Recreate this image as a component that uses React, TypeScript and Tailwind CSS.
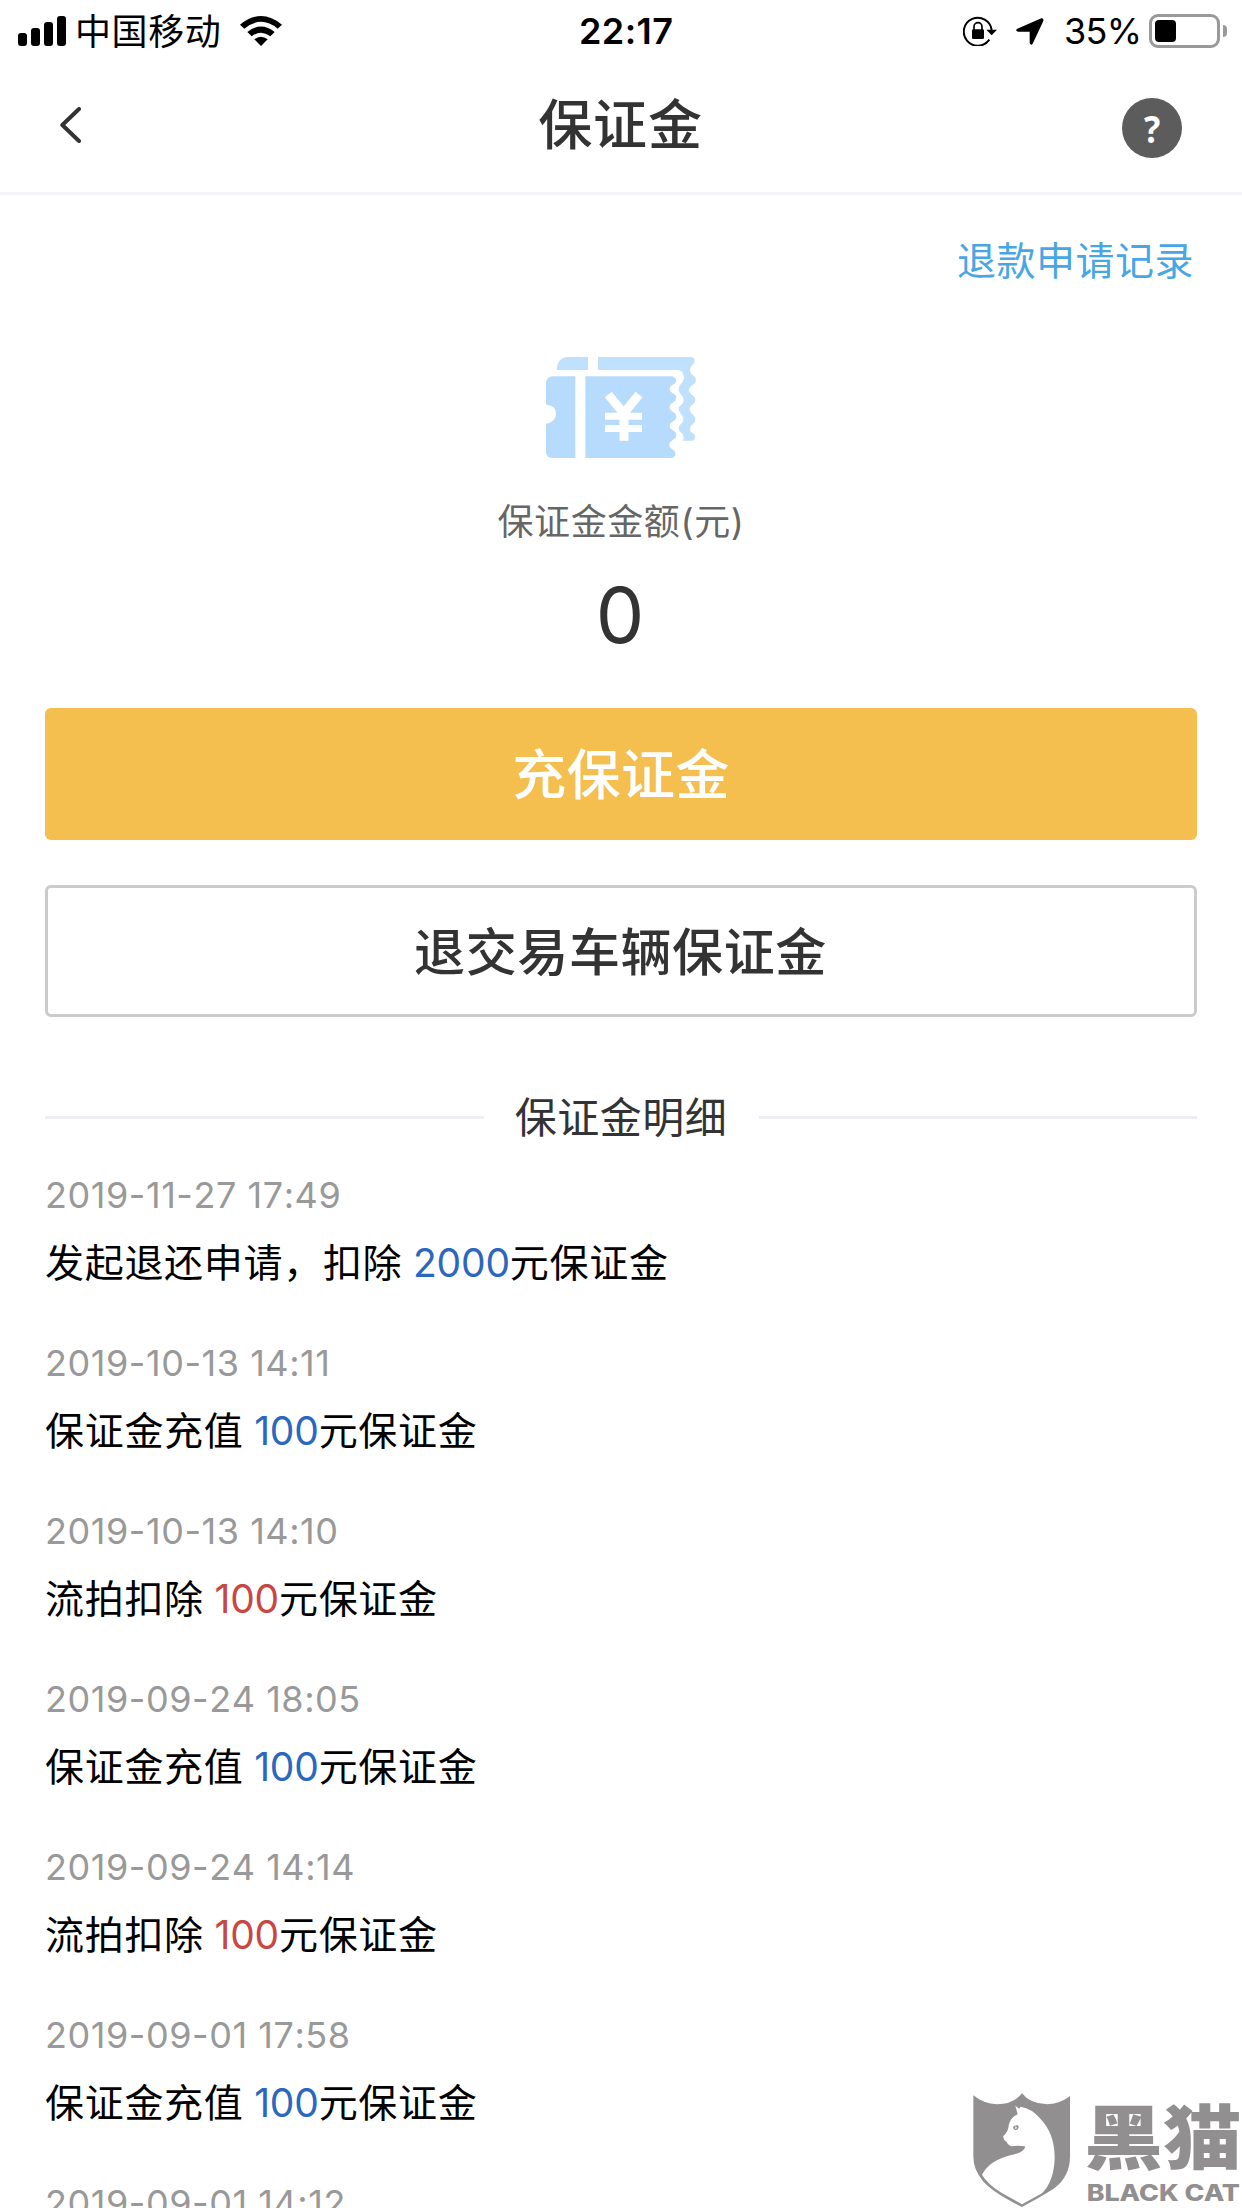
/**
 * Deposit page - balance, top-up / refund actions and the deposit history.
 */
type RecordItem = {
  time: string;
  action: string;
  amount: string;
  kind: 'normal' | 'deduct';
};

const records: RecordItem[] = [
  { time: '2019-11-27 17:49', action: '发起退还申请，扣除', amount: '2000', kind: 'normal' },
  { time: '2019-10-13 14:11', action: '保证金充值', amount: '100', kind: 'normal' },
  { time: '2019-10-13 14:10', action: '流拍扣除', amount: '100', kind: 'deduct' },
  { time: '2019-09-24 18:05', action: '保证金充值', amount: '100', kind: 'normal' },
  { time: '2019-09-24 14:14', action: '流拍扣除', amount: '100', kind: 'deduct' },
  { time: '2019-09-01 17:58', action: '保证金充值', amount: '100', kind: 'normal' },
  { time: '2019-09-01 14:12', action: '保证金充值', amount: '100', kind: 'normal' },
];

function StatusBar() {
  return (
    <div className="flex h-[62px] items-center pl-[18px] text-[36px] leading-[62px] text-black">
      <div className="flex w-[561px] items-center">
        <div className="flex h-[30px] items-end gap-1">
          <div className="h-[13px] w-[9px] rounded-[3px] bg-black" />
          <div className="h-[18px] w-[9px] rounded-[3px] bg-black" />
          <div className="h-6 w-[9px] rounded-[3px] bg-black" />
          <div className="h-[30px] w-[9px] rounded-[3px] bg-black" />
        </div>
        <span className="ml-[9px] w-[147px] pt-px tracking-[0.6px] whitespace-nowrap">中国移动</span>
        <svg className="ml-[18px] h-[30px] w-[42px]" viewBox="0 0 126 90">
          <path d="M0 26Q63 -26 126 26L113 38Q63 -3 13 38Z" />
          <path d="M22 48Q63 15 104 48L91 61Q63 40 35 61Z" />
          <path d="M43 70Q63 55 83 70L63 90Z" />
        </svg>
      </div>
      <span className="font-semibold tracking-[0.4px]">22:17</span>
      <div className="ml-auto flex items-center pr-[15px]">
        {/* Rotation lock */}
        <svg className="h-[30px] w-[34px]" viewBox="0 0 102 90">
          <path
            d="M79 71A42 42 0 1 1 86 42"
            fill="none"
            stroke="black"
            strokeWidth="6"
          />
          <path d="M70 41H102L86 58Z" />
          <rect x="27" y="40" width="36" height="29" rx="4" />
          <path d="M33 43V32a12 12 0 0 1 24 0V43" fill="none" stroke="black" strokeWidth="5" />
        </svg>
        <svg className="ml-[19px] h-[27px] w-[28px]" viewBox="0 0 84 81">
          <path d="M76 1Q84 0 82 9L50 77Q45 84 41 75V41H6Q-4 38 4 32Z" />
        </svg>
        <span className="ml-[20px] w-[77px] tracking-[-0.7px] whitespace-nowrap">35%</span>
        <div className="ml-[8px] h-[34px] w-[71px] rounded-[9px] border-[3px] border-[#999] p-[3px]">
          <div className="h-[22px] w-[21px] rounded-[4px] bg-black" />
        </div>
        <div className="ml-[3px] h-3 w-1 rounded-r-full bg-[#999]" />
      </div>
    </div>
  );
}

function Header() {
  return (
    <header className="flex h-[133px] items-center justify-between border-b-[3px] border-[#f4f4f9] pr-[60px] pb-1 pl-[60px]">
      <button className="w-[60px]">
        <svg className="h-9 w-[21px]" viewBox="0 0 63 108">
          <path
            d="M57 6L7 54L57 102"
            fill="none"
            stroke="#333"
            strokeWidth="12"
            strokeLinecap="round"
            strokeLinejoin="round"
          />
        </svg>
      </button>
      <h1 className="pt-[2px] pr-px text-[54px] leading-[60px] font-medium tracking-[0.8px] text-[#333]">
        保证金
      </h1>
      <button className="mt-[5px] h-[60px] w-[60px] rounded-full bg-[#5c5c5c] text-center font-['Open_Sans'] text-[38px] leading-[56px] font-bold text-white">
        <span className="inline-block scale-x-90">?</span>
      </button>
    </header>
  );
}

function TicketIcon() {
  return (
    <svg className="h-[101px] w-[150px]" viewBox="0 0 450 304" preserveAspectRatio="none">
      <g fill="#c0e1fe">
        <path d="M32 39Q34 3 62 0H126V39Z" />
        <path d="M156 0H434C446 0 448 10 444 18C440 26 432 28 432 40C432 54 450 56 450 70C450 84 429 86 429 100C429 114 448 114 448 129C448 144 431 144 431 158C431 172 448 172 448 187C448 202 432 202 432 216C432 230 447 228 447 240Q447 252 438 252H408C416 250 412 242 412 238C412 226 398 228 398 215C398 202 412 200 412 187C412 172 398 170 398 156C398 144 413 144 413 130C413 114 398 112 398 97C398 82 414 78 414 62Q413 40 394 39H156Z" />
      </g>
      <g fill="#b7dbfc">
        <path d="M18 58H88V304H18Q0 302 0 286V201Q30 196 30 170Q30 146 0 143V77Q2 60 18 58Z" />
        <path d="M118 58H376Q390 60 390 72C390 84 371 82 371 96C371 110 391 108 391 122C391 138 371 136 371 151C371 166 391 164 391 179C391 194 371 194 371 208C371 222 391 220 391 235C391 250 370 250 370 265C370 278 388 278 388 290Q388 304 376 304H118Z" />
      </g>
      <g fill="none" stroke="#fff">
        <path d="M187 113L233 170L279 113M234 166V252" strokeWidth="27" strokeLinejoin="round" />
        <path d="M177 178H288M177 215H288" strokeWidth="21" />
      </g>
    </svg>
  );
}

function RecordRow({ item }: { item: RecordItem }) {
  return (
    <li className="h-[168px] whitespace-nowrap">
      <p className="text-[36px] leading-[66px] tracking-[0.55px] text-[#999] [font-kerning:none]">
        {item.time}
      </p>
      <p className="text-[39px] leading-[70px] tracking-[0.7px] text-black">
        {item.action}{' '}
        <span
          className={
            item.kind === 'deduct'
              ? '-ml-px tracking-[-0.2px] text-[#c84742]'
              : '-ml-px tracking-[-0.2px] text-[#2b68bd]'
          }
        >
          {item.amount}
        </span>
        元保证金
      </p>
    </li>
  );
}

function Watermark() {
  return (
    <svg className="absolute right-0 bottom-0 h-[140px] w-[300px]" viewBox="0 0 900 420">
      <path
        fill="#918f90"
        d="M94 82Q124 107 165 109Q215 108 240 76Q264 108 316 109Q358 106 384 84V265Q384 325 338 360Q310 379 240 417Q150 372 122 338Q94 305 94 265Z"
      />
      <path
        fill="#fff"
        d="M220 113L232 122L236 116Q270 122 293 150Q338 195 338 270Q336 340 300 376L240 409L178 374Q136 348 120 320Q142 278 205 262Q246 255 250 235Q225 232 210 235Q198 232 194 222Q182 214 184 204Q200 190 200 172Q206 148 227 139Z"
      />
      <path fill="#918f90" d="M213 176Q222 168 230 174Q230 186 220 187Q213 184 213 176Z" />
      <path fill="#fff" d="M221 173L225 180L219 184Z" />
      <text
        x="427"
        y="287"
        fontSize="212"
        fontWeight="900"
        fill="#918f90"
        textLength="472"
        lengthAdjust="spacingAndGlyphs"
      >
        黑猫
      </text>
      <text
        x="434"
        y="398"
        fontSize="68"
        fontWeight="800"
        fill="#918f90"
        textLength="460"
        lengthAdjust="spacingAndGlyphs"
      >
        BLACK CAT
      </text>
    </svg>
  );
}

function App() {
  return (
    <div className="relative h-[2208px] w-[1242px] overflow-hidden bg-white font-['Inter','Noto_Sans_CJK_SC',sans-serif]">
      <StatusBar />
      <Header />

      <main className="px-[45px]">
        <div className="flex justify-end pt-[36px] pr-[3px]">
          <a className="text-[39px] leading-[60px] tracking-[0.5px] text-[#49a6e4]">退款申请记录</a>
        </div>

        {/* Balance */}
        <section className="flex flex-col items-center pt-[66px]">
          <TicketIcon />
          <p className="mt-[39px] text-[36px] leading-[50px] tracking-[0.6px] text-[#666]">
            保证金金额(元)
          </p>
          <p className="mt-[21px] pr-[2px] text-[77px] leading-[94px] text-[#333]">0</p>
        </section>

        {/* Actions */}
        <div className="mt-[46px] flex flex-col gap-[45px]">
          <button className="h-[132px] rounded-md bg-[#f4bf4f] pt-[2px] text-[54px] font-medium tracking-[0.4px] text-white">
            充保证金
          </button>
          <button className="h-[132px] rounded-md border-[3px] border-[#cbcbcb] pt-1 pr-px text-[51px] font-medium tracking-[0.6px] text-[#333]">
            退交易车辆保证金
          </button>
        </div>

        {/* History */}
        <div className="mt-[70px] flex items-center">
          <div className="h-[3px] flex-1 bg-[#eeeef4]" />
          <h2 className="w-[275px] pt-[2px] text-center text-[42px] leading-[58px] tracking-[0.5px] text-[#333]">
            保证金明细
          </h2>
          <div className="h-[3px] flex-1 bg-[#eeeef4]" />
        </div>
        <ul className="mt-[15px]">
          {records.map((item) => (
            <RecordRow key={item.time} item={item} />
          ))}
        </ul>
      </main>

      <Watermark />
    </div>
  );
}

export default App;
